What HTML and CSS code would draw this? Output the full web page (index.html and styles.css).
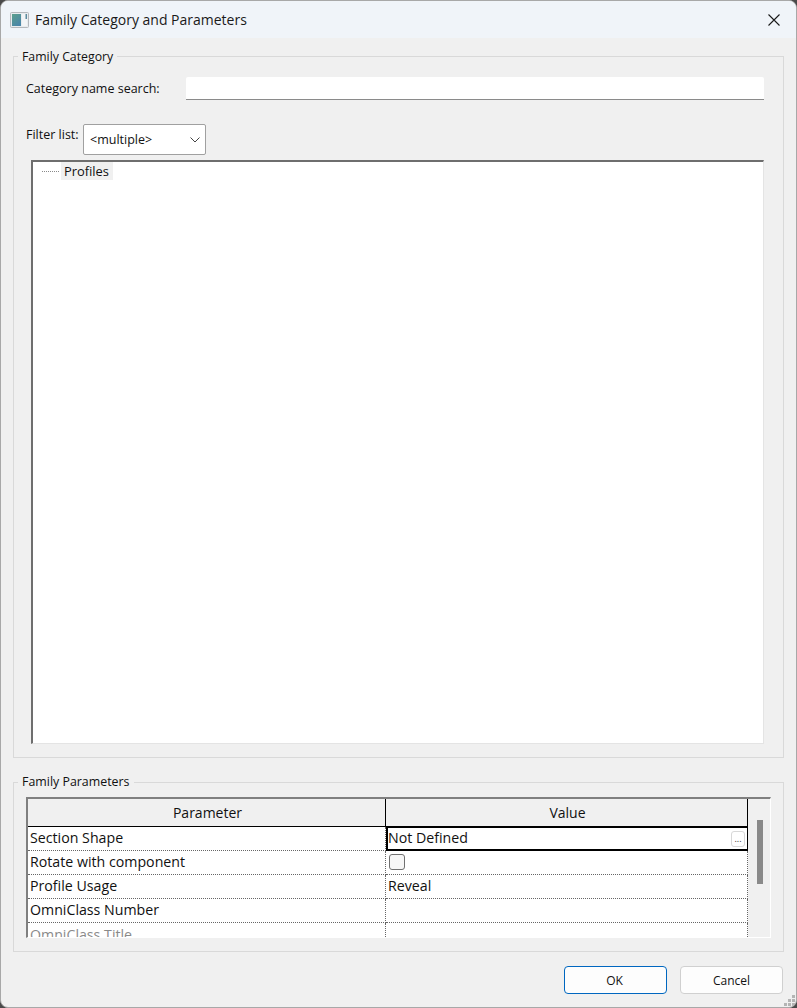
FILE: index.html
```html
<!DOCTYPE html>
<html lang="en">
<head>
<meta charset="utf-8">
<title>Family Category and Parameters</title>
<link rel="stylesheet" href="styles.css">
</head>
<body>
<div class="window">
  <header class="titlebar">
    <svg class="app-icon" width="20" height="18" viewBox="0 0 20 18">
      <defs><linearGradient id="g" x1="0" y1="0" x2="0.6" y2="1"><stop offset="0" stop-color="#5a9f8c"/><stop offset="1" stop-color="#4a86a8"/></linearGradient></defs>
      <rect x="0.5" y="1.5" width="18" height="15" rx="1" fill="#e8ebee" stroke="#b4b8bc"/>
      <rect x="2" y="3" width="9" height="12" fill="url(#g)"/>
      <rect x="12" y="3" width="5" height="12" fill="#f2f4f6"/>
      <rect x="15.5" y="3" width="1.5" height="5" fill="#5c8a9e"/>
    </svg>
    <span class="title">Family Category and Parameters</span>
    <svg class="close" width="12" height="12" viewBox="0 0 12 12"><path d="M0.5 0.5L11.5 11.5M11.5 0.5L0.5 11.5" stroke="#1a1a1a" stroke-width="1.1" fill="none"/></svg>
  </header>
  <main class="content">
    <section class="group group-category">
      <span class="legend">Family Category</span>
      <div class="search-row">
        <label class="label search-label">Category name search:</label>
        <div class="input"></div>
      </div>
      <div class="filter-row">
        <label class="label filter-label">Filter list:</label>
        <div class="select">
          <span>&lt;multiple&gt;</span>
          <svg width="10" height="6" viewBox="0 0 10 6"><path d="M0.5 0.5L5 5L9.5 0.5" stroke="#444" fill="none"/></svg>
        </div>
      </div>
      <div class="tree">
        <div class="tree-row"><span class="dots"></span><span class="node">Profiles</span></div>
      </div>
    </section>
    <section class="group group-params">
      <span class="legend legend-params">Family Parameters</span>
      <div class="table-wrap">
        <div class="table">
          <div class="head head-a">Parameter</div>
          <div class="head head-b">Value</div>
          <div class="cell name">Section Shape</div>
          <div class="cell val active">Not Defined<span class="more">...</span></div>
          <div class="cell name">Rotate with component</div>
          <div class="cell val"><span class="check"></span></div>
          <div class="cell name">Profile Usage</div>
          <div class="cell val">Reveal</div>
          <div class="cell name">OmniClass Number</div>
          <div class="cell val"></div>
          <div class="cell name muted">OmniClass Title</div>
          <div class="cell val"></div>
        </div>
        <div class="scrollbar"><div class="thumb"></div></div>
      </div>
    </section>
    <footer class="actions">
      <button class="btn primary">OK</button>
      <button class="btn">Cancel</button>
    </footer>
  </main>
  <svg class="grip" width="12" height="12" viewBox="0 0 12 12" fill="#b4b4b4"><rect x="8" y="0" width="3" height="3"/><rect x="4" y="4" width="3" height="3"/><rect x="8" y="4" width="3" height="3"/><rect x="0" y="8" width="3" height="3"/><rect x="4" y="8" width="3" height="3"/><rect x="8" y="8" width="3" height="3"/></svg>
</div>
</body>
</html>
```
FILE: styles.css
```css
* { box-sizing: border-box; }
html, body { margin: 0; padding: 0; background: #4a4a4a; }
body { width: 797px; height: 1008px; font-family: "Open Sans", "Noto Sans", "Liberation Sans", sans-serif; color: #111; overflow: hidden; }
.window { position: relative; width: 797px; height: 1008px; background: #f0f0f0; border: 1px solid #a8a8a8; border-radius: 8px; overflow: hidden; display: flex; flex-direction: column; }
.titlebar { height: 37px; flex: none; background: #f0f4f9; display: flex; align-items: center; padding: 0 0 0 9px; }
.app-icon { flex: none; margin-right: 5px; }
.title { font-size: 14px; color: #1a1a1a; flex: 1; }
.close { margin-right: 16px; }
.content { flex: 1; display: flex; flex-direction: column; padding: 18px 12px 0 12px; }
.group { position: relative; border: 1px solid #d9d9d9; }
.legend { position: absolute; left: 4px; top: -8px; padding: 0 4px; background: #f0f0f0; font-size: 12.3px; line-height: 16px; white-space: nowrap; }
.legend-params { top: -9px; font-size: 12.4px; }
.label { font-size: 12.5px; line-height: 16px; white-space: nowrap; }
.group-category { height: 702px; padding: 20px 19px 0 12px; display: flex; flex-direction: column; }
.search-row { display: flex; align-items: center; height: 23px; }
.search-label { width: 160px; }
.input { flex: 1; height: 23px; background: #fff; border-bottom: 1px solid #8a8a8a; border-radius: 2px 2px 0 0; }
.filter-row { display: flex; margin-top: 24px; height: 31px; }
.filter-label { width: 57px; padding-top: 3px; }
.select { width: 123px; height: 31px; background: #fff; border: 1px solid #a0a0a0; border-radius: 2px; display: flex; align-items: center; justify-content: space-between; padding: 0 5px 0 6px; font-size: 12.5px; }
.tree { margin: 5px 0 0 5px; width: 733px; height: 584px; background: #fff; border-top: 2px solid #6e6e6e; border-left: 2px solid #6e6e6e; border-right: 1px solid #e4e4e4; border-bottom: 1px solid #e4e4e4; }
.tree-row { display: flex; align-items: center; height: 18px; padding-left: 9px; }
.dots { width: 17px; border-top: 1px dotted #8a8a8a; margin-right: 2px; }
.node { background: #f0f0f0; font-size: 12.9px; line-height: 18px; padding: 0 4px 0 3px; }
.group-params { height: 170px; margin-top: 24px; padding: 14px 12px 14px 12px; }
.table-wrap { display: flex; height: 141px; border-top: 2px solid #808080; border-left: 2px solid #808080; border-right: 1px solid #fff; border-bottom: 1px solid #fff; overflow: hidden; }
.table { width: 720px; flex: none; display: grid; grid-template-columns: 358px 362px; grid-auto-rows: 24px; grid-template-rows: 28px; background: #fff; font-size: 14.2px; }
.head { background: #f0f0f0; display: flex; align-items: center; justify-content: center; border-bottom: 1px solid #000; border-right: 1px solid #000; font-size: 14px; padding-left: 2px; }
.cell { display: flex; align-items: center; position: relative; padding: 0 0 2px 2px; border-bottom: 1px dotted #666; white-space: nowrap; line-height: 20px; }
.name { border-right: 1px dotted #666; }
.val { border-right: 1px dotted #666; padding-left: 2px; }
.muted { color: #8a8a8a; align-items: flex-start; padding: 2px 0 0 2px; }
.active { border: 2px solid #000; border-top-width: 1px; border-right-width: 1px; padding-left: 0; }
.more { position: absolute; right: 2px; top: 3px; width: 14px; height: 16px; border: 1px solid #d8d8d8; border-radius: 3px; font-size: 9px; line-height: 14px; text-align: center; color: #333; }
.check { width: 16px; height: 16px; border: 1px solid #707070; border-radius: 3px; background: #f6f6f6; margin-left: 1px; }
.scrollbar { flex: 1; background: #f0f0f0; padding: 21px 0 0 9px; }
.thumb { width: 6px; height: 64px; background: #8a8a8a; }
.actions { display: flex; justify-content: flex-end; gap: 13px; margin-top: 14px; padding-right: 1px; }
.btn { width: 103px; height: 28px; background: #fdfdfd; border: 1px solid #d0d0d0; border-radius: 4px; font-family: inherit; font-size: 12px; color: #111; padding: 0 0 0 0; }
.primary { border: 1px solid #0067c0; padding-right: 2px; }
.grip { position: absolute; right: 0; bottom: 0; }
```
